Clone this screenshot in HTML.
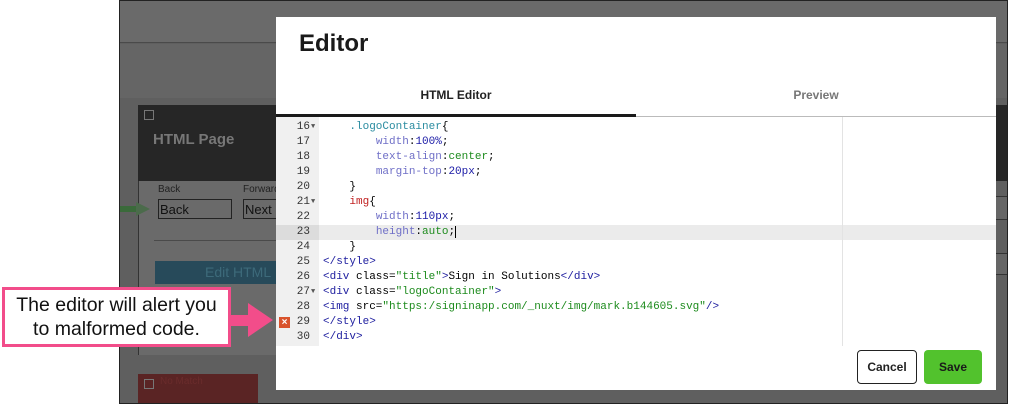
<!DOCTYPE html>
<html><head><meta charset="utf-8"><style>
*{margin:0;padding:0;box-sizing:border-box}
body{width:1009px;height:404px;background:#fff;position:relative;overflow:hidden;font-family:"Liberation Sans",sans-serif}
.abs{position:absolute}
.frame{left:119px;top:0;width:889px;height:404px;background:#5f5f5f;border:1px solid #222;overflow:hidden}
.code{font-family:"Liberation Mono",monospace;font-size:11px;line-height:15px;white-space:pre}
.ln{position:absolute;left:0;width:34px;text-align:right;color:#333}
.ar{position:absolute;left:35px;font-size:7px;color:#555}
.k{color:#6f6fc7}.v{color:#1a1aa6}.s{color:#1d8b1d}.t{color:#2020a0}.c{color:#2a8ca0}.r{color:#c02020}
</style></head><body>
<div class="abs frame">
  <div class="abs" style="left:0;top:0;width:889px;height:42px;background:#6a6a6a;border-bottom:1px solid #4a4a4a"></div>
  <div class="abs" style="left:0;top:43px;width:889px;height:54px;background:#656565"></div>
  <div class="abs" style="left:18px;top:104px;width:260px;height:250px;background:#6a6a6a;border-left:1px solid #333"></div>
  <div class="abs" style="left:18px;top:104px;width:880px;height:76px;background:#262626"></div>
  <div class="abs" style="left:24px;top:109px;width:10px;height:10px;border:1px solid #777"></div>
  <div class="abs" style="left:33px;top:130px;color:#777;font-weight:bold;font-size:15px">HTML Page</div>
  <div class="abs" style="left:38px;top:183px;color:#222;font-size:10px">Back</div>
  <div class="abs" style="left:123px;top:183px;color:#222;font-size:10px">Forward</div>
  <div class="abs" style="left:38px;top:198px;width:74px;height:20px;border:1px solid #222;font-size:13px;padding:2px 1px;color:#111">Back</div>
  <div class="abs" style="left:123px;top:198px;width:60px;height:20px;border:1px solid #222;font-size:13px;padding:2px 1px;color:#111">Next</div>
  <div class="abs" style="left:0;top:205px;width:20px;height:6px;background:#3a6a3a"></div>
  <div class="abs" style="left:16px;top:201px;width:0;height:0;border-left:14px solid #4b6b4b;border-top:7px solid transparent;border-bottom:7px solid transparent"></div>
  <div class="abs" style="left:34px;top:239px;width:140px;height:1px;background:#4a4a4a"></div>
  <div class="abs" style="left:35px;top:260px;width:130px;height:23px;background:#274a5a;color:#3d6a7a;font-size:14px;padding:3px 0 0 50px">Edit HTML</div>
  <div class="abs" style="left:18px;top:373px;width:120px;height:31px;background:#5a2424"></div>
  <div class="abs" style="left:24px;top:378px;width:10px;height:10px;border:1px solid #777"></div>
  <div class="abs" style="left:40px;top:375px;color:#6a2c2c;font-size:10px">No Match</div>
  <div class="abs" style="left:870px;top:195px;width:19px;height:24px;border:1px solid #333;background:#666"></div>
  <div class="abs" style="left:870px;top:252px;width:19px;height:22px;border:1px solid #333;background:#666"></div>
</div>
<div class="abs" style="left:276px;top:17px;width:720px;height:373px;background:#fff">
  <div class="abs" style="left:23px;top:13px;font-size:24px;font-weight:bold;color:#1a1a1a">Editor</div>
  <div class="abs" style="left:0;top:71px;width:360px;text-align:center;font-size:12px;font-weight:bold;color:#222">HTML Editor</div>
  <div class="abs" style="left:360px;top:71px;width:360px;text-align:center;font-size:12px;font-weight:bold;color:#777">Preview</div>
  <div class="abs" style="left:0;top:97px;width:360px;height:3px;background:#1a1a1a"></div>
  <div class="abs" style="left:360px;top:99px;width:360px;height:1px;background:#bbb"></div>
  <div class="abs" style="left:0;top:100px;width:43px;height:229px;background:#f0f0f0"></div>
  <div class="abs" style="left:0;top:208px;width:720px;height:15px;background:#ebebeb"></div>
  <div class="abs" style="left:0;top:208px;width:43px;height:15px;background:#dcdcdc"></div>
  <div class="abs" style="left:566px;top:100px;width:1px;height:229px;background:#e3e3e3"></div>
  <div class="abs code" style="left:0;top:103px;width:560px;height:228px">
<div class="ln" style="top:0">16</div><div class="ar" style="top:0">▼</div><div class="ln" style="top:15px">17</div><div class="ln" style="top:30px">18</div><div class="ln" style="top:45px">19</div><div class="ln" style="top:60px">20</div><div class="ln" style="top:75px">21</div><div class="ar" style="top:75px">▼</div><div class="ln" style="top:90px">22</div><div class="ln" style="top:105px">23</div><div class="ln" style="top:120px">24</div><div class="ln" style="top:135px">25</div><div class="ln" style="top:150px">26</div><div class="ln" style="top:165px">27</div><div class="ar" style="top:165px">▼</div><div class="ln" style="top:180px">28</div><div class="ln" style="top:195px">29</div><div class="ln" style="top:210px">30</div>
<div class="abs" style="left:3px;top:197px;width:11px;height:11px;background:#d9532c;color:#fff;font-size:10px;line-height:11px;text-align:center;font-family:'Liberation Sans';font-weight:bold">×</div>
<div class="abs" style="left:47px;top:0">    <span class="c">.logoContainer</span>{
        <span class="k">width</span>:<span class="v">100%</span>;
        <span class="k">text-align</span>:<span class="s">center</span>;
        <span class="k">margin-top</span>:<span class="v">20px</span>;
    }
    <span class="r">img</span>{
        <span class="k">width</span>:<span class="v">110px</span>;
        <span class="k">height</span>:<span class="s">auto</span>;<span style="border-left:1px solid #000"></span>
    }
<span class="t">&lt;/style&gt;</span>
<span class="t">&lt;div</span> class=<span class="s">"title"</span><span class="t">&gt;</span>Sign in Solutions<span class="t">&lt;/div&gt;</span>
<span class="t">&lt;div</span> class=<span class="s">"logoContainer"</span><span class="t">&gt;</span>
<span class="t">&lt;img</span> src=<span class="s">"https:/signinapp.com/_nuxt/img/mark.b144605.svg"</span><span class="t">/&gt;</span>
<span class="t">&lt;/style&gt;</span>
<span class="t">&lt;/div&gt;</span></div>
  </div>
  <div class="abs" style="left:581px;top:333px;width:60px;height:34px;border:1px solid #222;border-radius:4px;font-size:12px;font-weight:bold;color:#222;text-align:center;line-height:32px">Cancel</div>
  <div class="abs" style="left:648px;top:333px;width:58px;height:34px;background:#52c22d;border-radius:4px;font-size:12px;font-weight:bold;color:#1a1a1a;text-align:center;line-height:34px">Save</div>
</div>
<div class="abs" style="left:2px;top:287px;width:229px;height:60px;border:3px solid #f24d8a;background:#fff;text-align:center;font-size:19.5px;line-height:24px;padding-top:3px;color:#111;white-space:nowrap">The editor will alert you<br>to malformed code.</div>
<div class="abs" style="left:230px;top:315px;width:20px;height:11px;background:#f24d8a"></div>
<div class="abs" style="left:248px;top:303px;width:0;height:0;border-left:25px solid #f24d8a;border-top:17px solid transparent;border-bottom:17px solid transparent"></div>
</body></html>
